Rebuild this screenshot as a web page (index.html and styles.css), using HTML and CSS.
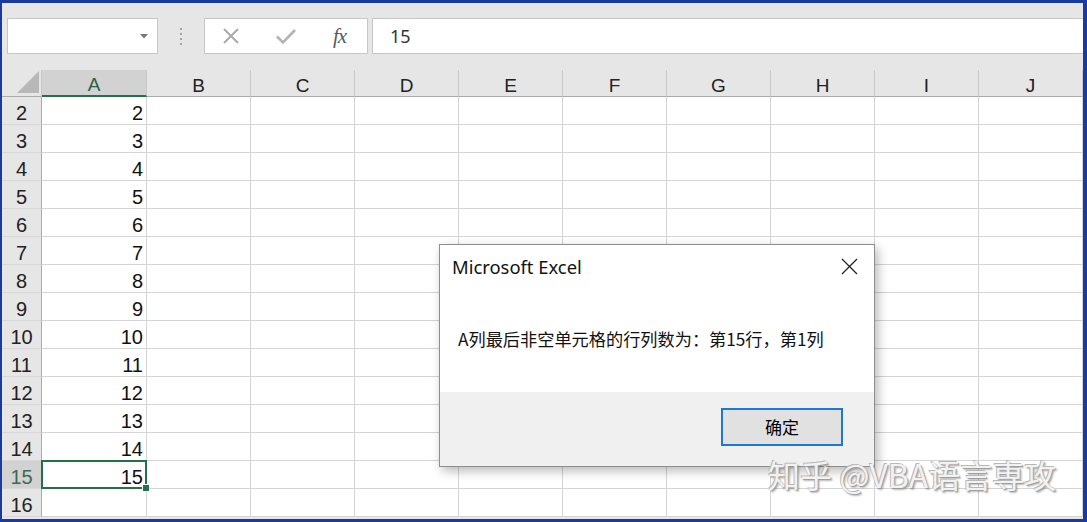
FILE: index.html
```html
<!DOCTYPE html>
<html lang="zh-CN">
<head>
<meta charset="utf-8">
<title>Excel</title>
<link rel="stylesheet" href="styles.css">
</head>
<body>
<div class="frame">
  <div class="toolbar">
    <div class="namebox">
      <svg class="drop" width="8" height="5" viewBox="0 0 8 5"><path d="M0 0h8L4 4.5z" fill="#777"/></svg>
    </div>
    <div class="grip"><i></i><i></i><i></i><i></i></div>
    <div class="fxbox">
      <svg class="ico x" width="20" height="20" viewBox="0 0 20 20"><path d="M3 3L17 17M17 3L3 17" stroke="#aaa" stroke-width="2" fill="none"/></svg>
      <svg class="ico ok" width="22" height="20" viewBox="0 0 22 20"><path d="M2 10.5L8 16.5L20 4" stroke="#b4b4b4" stroke-width="2.6" fill="none"/></svg>
      <span class="fx">fx</span>
    </div>
    <div class="formula">15</div>
  </div>
  <div class="grid">
    <div class="corner"><svg width="24" height="24" viewBox="0 0 24 24"><path d="M23 1V23H1z" fill="#b8b8b8"/></svg></div>
    <div class="ch chsel">A</div><div class="ch">B</div><div class="ch">C</div><div class="ch">D</div><div class="ch">E</div><div class="ch">F</div><div class="ch">G</div><div class="ch">H</div><div class="ch">I</div><div class="ch">J</div>

    <div class="rh">2</div><div class="c n">2</div><div class="c"></div><div class="c"></div><div class="c"></div><div class="c"></div><div class="c"></div><div class="c"></div><div class="c"></div><div class="c"></div><div class="c"></div>
    <div class="rh">3</div><div class="c n">3</div><div class="c"></div><div class="c"></div><div class="c"></div><div class="c"></div><div class="c"></div><div class="c"></div><div class="c"></div><div class="c"></div><div class="c"></div>
    <div class="rh">4</div><div class="c n">4</div><div class="c"></div><div class="c"></div><div class="c"></div><div class="c"></div><div class="c"></div><div class="c"></div><div class="c"></div><div class="c"></div><div class="c"></div>
    <div class="rh">5</div><div class="c n">5</div><div class="c"></div><div class="c"></div><div class="c"></div><div class="c"></div><div class="c"></div><div class="c"></div><div class="c"></div><div class="c"></div><div class="c"></div>
    <div class="rh">6</div><div class="c n">6</div><div class="c"></div><div class="c"></div><div class="c"></div><div class="c"></div><div class="c"></div><div class="c"></div><div class="c"></div><div class="c"></div><div class="c"></div>
    <div class="rh">7</div><div class="c n">7</div><div class="c"></div><div class="c"></div><div class="c"></div><div class="c"></div><div class="c"></div><div class="c"></div><div class="c"></div><div class="c"></div><div class="c"></div>
    <div class="rh">8</div><div class="c n">8</div><div class="c"></div><div class="c"></div><div class="c"></div><div class="c"></div><div class="c"></div><div class="c"></div><div class="c"></div><div class="c"></div><div class="c"></div>
    <div class="rh">9</div><div class="c n">9</div><div class="c"></div><div class="c"></div><div class="c"></div><div class="c"></div><div class="c"></div><div class="c"></div><div class="c"></div><div class="c"></div><div class="c"></div>
    <div class="rh">10</div><div class="c n">10</div><div class="c"></div><div class="c"></div><div class="c"></div><div class="c"></div><div class="c"></div><div class="c"></div><div class="c"></div><div class="c"></div><div class="c"></div>
    <div class="rh">11</div><div class="c n">11</div><div class="c"></div><div class="c"></div><div class="c"></div><div class="c"></div><div class="c"></div><div class="c"></div><div class="c"></div><div class="c"></div><div class="c"></div>
    <div class="rh">12</div><div class="c n">12</div><div class="c"></div><div class="c"></div><div class="c"></div><div class="c"></div><div class="c"></div><div class="c"></div><div class="c"></div><div class="c"></div><div class="c"></div>
    <div class="rh">13</div><div class="c n">13</div><div class="c"></div><div class="c"></div><div class="c"></div><div class="c"></div><div class="c"></div><div class="c"></div><div class="c"></div><div class="c"></div><div class="c"></div>
    <div class="rh">14</div><div class="c n">14</div><div class="c"></div><div class="c"></div><div class="c"></div><div class="c"></div><div class="c"></div><div class="c"></div><div class="c"></div><div class="c"></div><div class="c"></div>
    <div class="rh rhsel">15</div><div class="c n sel">15</div><div class="c"></div><div class="c"></div><div class="c"></div><div class="c"></div><div class="c"></div><div class="c"></div><div class="c"></div><div class="c"></div><div class="c"></div>
    <div class="rh">16</div><div class="c n"></div><div class="c"></div><div class="c"></div><div class="c"></div><div class="c"></div><div class="c"></div><div class="c"></div><div class="c"></div><div class="c"></div><div class="c"></div>
  </div>

  <div class="dialog">
    <div class="dtitle">
      <span>Microsoft Excel</span>
      <svg class="close" width="17" height="17" viewBox="0 0 17 17"><path d="M1 1L16 16M16 1L1 16" stroke="#222" stroke-width="1.3" fill="none"/></svg>
    </div>
    <div class="dbody">A列最后非空单元格的行列数为：第15行，第1列</div>
    <div class="dfoot"><div class="btn">确定</div></div>
  </div>

  <div class="watermark">知乎 @VBA语言専攻</div>
</div>
</body>
</html>
```

FILE: styles.css
```css
* { box-sizing: border-box; }
html, body { margin: 0; padding: 0; background: #fff; }
.frame {
  position: relative;
  width: 1087px;
  height: 522px;
  border-style: solid;
  border-color: #1b3a9e;
  border-width: 3px 4px 3px 2px;
  background: #e6e6e6;
  overflow: hidden;
  font-family: "Noto Sans", "Noto Sans CJK SC", sans-serif;
}
.toolbar {
  height: 67px;
  display: flex;
  align-items: flex-start;
  padding: 15px 0 0 5px;
}
.namebox {
  width: 151px;
  height: 36px;
  background: #fff;
  border: 1px solid #c6c6c6;
  display: flex;
  align-items: center;
  justify-content: flex-end;
  padding-right: 9px;
}
.grip {
  width: 46px;
  height: 36px;
  display: flex;
  flex-direction: column;
  align-items: center;
  justify-content: center;
  gap: 3px;
}
.grip i { display: block; width: 2px; height: 2px; background: #a5a5a5; }
.fxbox {
  width: 164px;
  height: 36px;
  background: #fff;
  border: 1px solid #c6c6c6;
  display: flex;
  align-items: center;
  padding-left: 16px;
}
.fxbox .ok { margin-left: 34px; }
.fx {
  font-family: "Liberation Serif", "DejaVu Serif", serif;
  font-style: italic;
  font-size: 21px;
  color: #5a5a5a;
  margin-left: 36px;
  letter-spacing: -1px;
}
.formula {
  flex: 1;
  height: 36px;
  margin-left: 4px;
  background: #fff;
  border: 1px solid #c6c6c6;
  border-right: none;
  padding-left: 17px;
  line-height: 34px;
  font-size: 18px;
  color: #333;
}
.grid {
  display: grid;
  grid-template-columns: 40px 105px repeat(9, 104px);
  grid-template-rows: 27px repeat(15, 28px);
  font-family: "Liberation Sans", Arial, sans-serif;
}
.corner {
  background: #e6e6e6;
  border-right: 1px solid #c8c8c8;
  border-bottom: 1px solid #ababab;
  display: flex;
  align-items: flex-end;
  justify-content: flex-end;
  padding: 0 1px 2px 0;
}
.ch {
  background: #e6e6e6;
  border-right: 1px solid #c8c8c8;
  border-bottom: 1px solid #ababab;
  text-align: center;
  font-size: 19px;
  line-height: 31px;
  color: #222;
}
.chsel {
  background: #d2d2d2;
  color: #2c5e44;
  border-bottom: 2px solid #217346;
  line-height: 30px;
}
.rh {
  background: #e6e6e6;
  border-right: 1px solid #ababab;
  border-bottom: 1px solid #d8d8d8;
  text-align: center;
  font-size: 20px;
  line-height: 32px;
  color: #222;
}
.rhsel { background: #d2d2d2; color: #3f6a53; }
.c {
  background: #fff;
  border-right: 1px solid #d4d4d4;
  border-bottom: 1px solid #d4d4d4;
}
.n {
  text-align: right;
  padding-right: 3px;
  font-size: 20px;
  line-height: 32px;
  color: #111;
}
.sel { position: relative; }
.sel::after {
  content: "";
  position: absolute;
  left: -1px; top: -1px; right: -1px; bottom: -1px;
  border: 2px solid #217346;
}
.sel::before {
  content: "";
  position: absolute;
  right: -4px; bottom: -4px;
  width: 6px; height: 6px;
  background: #217346;
  border: 1px solid #fff;
  z-index: 2;
  box-sizing: content-box;
}
.dialog {
  position: absolute;
  left: 437px;
  top: 241px;
  width: 436px;
  height: 223px;
  background: #fff;
  border: 1px solid #8e8e8e;
  box-shadow: 3px 4px 10px rgba(0,0,0,0.28);
  display: flex;
  flex-direction: column;
  font-family: "Noto Sans", "Noto Sans CJK SC", sans-serif;
}
.dtitle {
  height: 46px;
  display: flex;
  align-items: center;
  justify-content: space-between;
  padding: 0 16px 4px 12px;
  font-size: 18.4px;
  color: #111;
}
.dbody {
  flex: 1;
  padding: 35px 0 0 18px;
  font-family: "Noto Sans CJK SC", sans-serif;
  font-size: 17.2px;
  color: #111;
}
.dfoot {
  height: 74px;
  background: #f0f0f0;
  display: flex;
  justify-content: flex-end;
  padding: 16px 31px 0 0;
}
.btn {
  width: 122px;
  height: 38px;
  border: 2px solid #1b79cf;
  background: #e1e1e1;
  text-align: center;
  line-height: 33px;
  font-family: "Noto Sans CJK SC", sans-serif;
  font-size: 17px;
  color: #000;
}
.watermark {
  position: absolute;
  left: 766px;
  top: 448px;
  font-family: "Noto Sans CJK SC", sans-serif;
  font-size: 32px;
  color: #f2f2f2;
  text-shadow: -1px -1px 0 #b8b8b8, 1px 1px 1px #9a9a9a, 2px 2px 2px rgba(0,0,0,0.25);
  white-space: nowrap;
}
```
